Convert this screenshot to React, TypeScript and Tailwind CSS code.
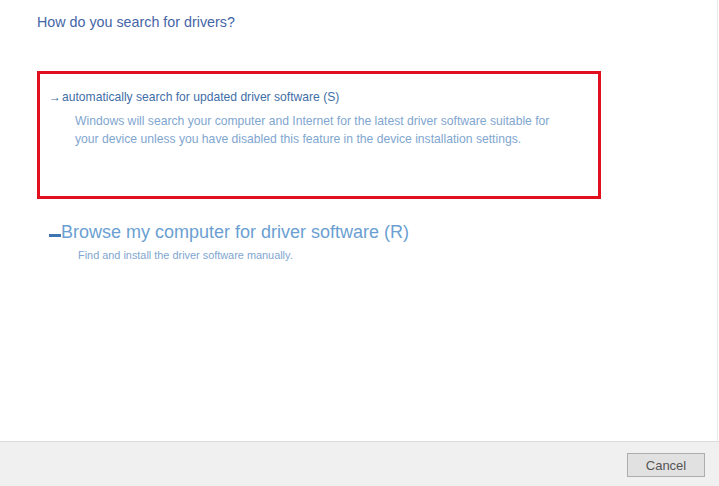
import React from "react";

export default function App() {
  return (
    <div className="w-[719px] h-[486px] flex flex-col bg-white overflow-hidden" style={{ fontFamily: '"Liberation Sans", Arial, sans-serif' }}>
      <div className="flex-1 flex border-r border-[#ececec] mr-[1px]">
        <div className="flex-1 flex flex-col pl-[37px] pt-[13px]">
          <div className="text-[14.3px] text-[#4565a6] leading-[18px]">How do you search for drivers?</div>
          <div className="mt-[40px] w-[564px] h-[128px] border-[3px] border-[#e0101e] pl-[9px] pt-[16px]">
            <div className="flex items-center">
              <span className="text-[12px] text-[#3d6aa6] w-[13px] leading-[14px]">→</span>
              <span className="text-[12.12px] text-[#3f6ea8] leading-[14px]">automatically search for updated driver software (S)</span>
            </div>
            <div className="pl-[26px] mt-[8px] text-[12.15px] leading-[18px] text-[#7fa6d0]">
              <div>Windows will search your computer and Internet for the latest driver software suitable for</div>
              <div>your device unless you have disabled this feature in the device installation settings.</div>
            </div>
          </div>
          <div className="mt-[22px] flex items-center pl-[12px]">
            <span className="w-[12px] h-[3px] bg-[#3f74b3] mt-[6px]"></span>
            <span className="text-[18px] leading-[22px] text-[#6b9fd2]">Browse my computer for driver software (R)</span>
          </div>
          <div className="pl-[41px] mt-[5px] text-[10.9px] leading-[14px] text-[#7fa6d0]">Find and install the driver software manually.</div>
        </div>
      </div>
      <div className="h-[45px] bg-[#f0f0f0] border-t border-[#dcdcdc] flex items-start justify-end pr-[14px] pt-[11px]">
        <button className="w-[78px] h-[24px] bg-[#e1e1e1] border border-[#adadad] text-[13px] text-[#555] leading-none">Cancel</button>
      </div>
    </div>
  );
}
